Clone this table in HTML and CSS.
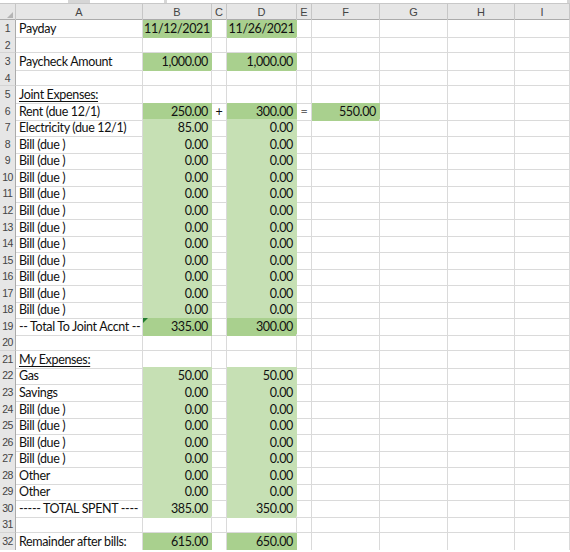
FILE: index.html
```html
<!DOCTYPE html>
<html>
<head>
<meta charset="utf-8">
<link rel="stylesheet" href="styles.css">
</head>
<body>
<div class="sheet">
  <div class="topbar"><span class="tb w1"></span><span class="tb w2"></span><span class="tb w3"></span></div>
  <div class="r hdr"><div class="corner"></div><div class="ch">A</div><div class="ch">B</div><div class="ch">C</div><div class="ch">D</div><div class="ch">E</div><div class="ch">F</div><div class="ch">G</div><div class="ch">H</div><div class="ch">I</div></div>

  <div class="r"><div class="h">1</div><div class="c">Payday</div><div class="c ctr g2">11/12/2021</div><div class="c"></div><div class="c ctr g2">11/26/2021</div><div class="c"></div><div class="c"></div><div class="c"></div><div class="c"></div><div class="c"></div></div>
  <div class="r"><div class="h">2</div><div class="c"></div><div class="c"></div><div class="c"></div><div class="c"></div><div class="c"></div><div class="c"></div><div class="c"></div><div class="c"></div><div class="c"></div></div>
  <div class="r"><div class="h">3</div><div class="c">Paycheck Amount</div><div class="c n g2">1,000.00</div><div class="c"></div><div class="c n g2">1,000.00</div><div class="c"></div><div class="c"></div><div class="c"></div><div class="c"></div><div class="c"></div></div>
  <div class="r"><div class="h">4</div><div class="c"></div><div class="c"></div><div class="c"></div><div class="c"></div><div class="c"></div><div class="c"></div><div class="c"></div><div class="c"></div><div class="c"></div></div>
  <div class="r"><div class="h">5</div><div class="c u">Joint Expenses:</div><div class="c"></div><div class="c"></div><div class="c"></div><div class="c"></div><div class="c"></div><div class="c"></div><div class="c"></div><div class="c"></div></div>
  <div class="r"><div class="h">6</div><div class="c">Rent (due 12/1)</div><div class="c n g2">250.00</div><div class="c ctr">+</div><div class="c n g2">300.00</div><div class="c ctr op">=</div><div class="c n g2">550.00</div><div class="c"></div><div class="c"></div><div class="c"></div></div>
  <div class="r"><div class="h">7</div><div class="c">Electricity (due 12/1)</div><div class="c n g1">85.00</div><div class="c"></div><div class="c n g1">0.00</div><div class="c"></div><div class="c"></div><div class="c"></div><div class="c"></div><div class="c"></div></div>
  <div class="r"><div class="h">8</div><div class="c">Bill (due )</div><div class="c n g1">0.00</div><div class="c"></div><div class="c n g1">0.00</div><div class="c"></div><div class="c"></div><div class="c"></div><div class="c"></div><div class="c"></div></div>
  <div class="r"><div class="h">9</div><div class="c">Bill (due )</div><div class="c n g1">0.00</div><div class="c"></div><div class="c n g1">0.00</div><div class="c"></div><div class="c"></div><div class="c"></div><div class="c"></div><div class="c"></div></div>
  <div class="r"><div class="h">10</div><div class="c">Bill (due )</div><div class="c n g1">0.00</div><div class="c"></div><div class="c n g1">0.00</div><div class="c"></div><div class="c"></div><div class="c"></div><div class="c"></div><div class="c"></div></div>
  <div class="r"><div class="h">11</div><div class="c">Bill (due )</div><div class="c n g1">0.00</div><div class="c"></div><div class="c n g1">0.00</div><div class="c"></div><div class="c"></div><div class="c"></div><div class="c"></div><div class="c"></div></div>
  <div class="r"><div class="h">12</div><div class="c">Bill (due )</div><div class="c n g1">0.00</div><div class="c"></div><div class="c n g1">0.00</div><div class="c"></div><div class="c"></div><div class="c"></div><div class="c"></div><div class="c"></div></div>
  <div class="r"><div class="h">13</div><div class="c">Bill (due )</div><div class="c n g1">0.00</div><div class="c"></div><div class="c n g1">0.00</div><div class="c"></div><div class="c"></div><div class="c"></div><div class="c"></div><div class="c"></div></div>
  <div class="r"><div class="h">14</div><div class="c">Bill (due )</div><div class="c n g1">0.00</div><div class="c"></div><div class="c n g1">0.00</div><div class="c"></div><div class="c"></div><div class="c"></div><div class="c"></div><div class="c"></div></div>
  <div class="r"><div class="h">15</div><div class="c">Bill (due )</div><div class="c n g1">0.00</div><div class="c"></div><div class="c n g1">0.00</div><div class="c"></div><div class="c"></div><div class="c"></div><div class="c"></div><div class="c"></div></div>
  <div class="r"><div class="h">16</div><div class="c">Bill (due )</div><div class="c n g1">0.00</div><div class="c"></div><div class="c n g1">0.00</div><div class="c"></div><div class="c"></div><div class="c"></div><div class="c"></div><div class="c"></div></div>
  <div class="r"><div class="h">17</div><div class="c">Bill (due )</div><div class="c n g1">0.00</div><div class="c"></div><div class="c n g1">0.00</div><div class="c"></div><div class="c"></div><div class="c"></div><div class="c"></div><div class="c"></div></div>
  <div class="r"><div class="h">18</div><div class="c">Bill (due )</div><div class="c n g1">0.00</div><div class="c"></div><div class="c n g1">0.00</div><div class="c"></div><div class="c"></div><div class="c"></div><div class="c"></div><div class="c"></div></div>
  <div class="r"><div class="h">19</div><div class="c">-- Total To Joint Accnt --</div><div class="c n g2 flag">335.00</div><div class="c"></div><div class="c n g2">300.00</div><div class="c"></div><div class="c"></div><div class="c"></div><div class="c"></div><div class="c"></div></div>
  <div class="r"><div class="h">20</div><div class="c"></div><div class="c"></div><div class="c"></div><div class="c"></div><div class="c"></div><div class="c"></div><div class="c"></div><div class="c"></div><div class="c"></div></div>
  <div class="r"><div class="h">21</div><div class="c u">My Expenses:</div><div class="c"></div><div class="c"></div><div class="c"></div><div class="c"></div><div class="c"></div><div class="c"></div><div class="c"></div><div class="c"></div></div>
  <div class="r"><div class="h">22</div><div class="c">Gas</div><div class="c n g1">50.00</div><div class="c"></div><div class="c n g1">50.00</div><div class="c"></div><div class="c"></div><div class="c"></div><div class="c"></div><div class="c"></div></div>
  <div class="r"><div class="h">23</div><div class="c">Savings</div><div class="c n g1">0.00</div><div class="c"></div><div class="c n g1">0.00</div><div class="c"></div><div class="c"></div><div class="c"></div><div class="c"></div><div class="c"></div></div>
  <div class="r"><div class="h">24</div><div class="c">Bill (due )</div><div class="c n g1">0.00</div><div class="c"></div><div class="c n g1">0.00</div><div class="c"></div><div class="c"></div><div class="c"></div><div class="c"></div><div class="c"></div></div>
  <div class="r"><div class="h">25</div><div class="c">Bill (due )</div><div class="c n g1">0.00</div><div class="c"></div><div class="c n g1">0.00</div><div class="c"></div><div class="c"></div><div class="c"></div><div class="c"></div><div class="c"></div></div>
  <div class="r"><div class="h">26</div><div class="c">Bill (due )</div><div class="c n g1">0.00</div><div class="c"></div><div class="c n g1">0.00</div><div class="c"></div><div class="c"></div><div class="c"></div><div class="c"></div><div class="c"></div></div>
  <div class="r"><div class="h">27</div><div class="c">Bill (due )</div><div class="c n g1">0.00</div><div class="c"></div><div class="c n g1">0.00</div><div class="c"></div><div class="c"></div><div class="c"></div><div class="c"></div><div class="c"></div></div>
  <div class="r"><div class="h">28</div><div class="c">Other</div><div class="c n g1">0.00</div><div class="c"></div><div class="c n g1">0.00</div><div class="c"></div><div class="c"></div><div class="c"></div><div class="c"></div><div class="c"></div></div>
  <div class="r"><div class="h">29</div><div class="c">Other</div><div class="c n g1">0.00</div><div class="c"></div><div class="c n g1">0.00</div><div class="c"></div><div class="c"></div><div class="c"></div><div class="c"></div><div class="c"></div></div>
  <div class="r"><div class="h">30</div><div class="c">----- TOTAL SPENT ----</div><div class="c n g1">385.00</div><div class="c"></div><div class="c n g1">350.00</div><div class="c"></div><div class="c"></div><div class="c"></div><div class="c"></div><div class="c"></div></div>
  <div class="r"><div class="h">31</div><div class="c"></div><div class="c"></div><div class="c"></div><div class="c"></div><div class="c"></div><div class="c"></div><div class="c"></div><div class="c"></div><div class="c"></div></div>
  <div class="r"><div class="h">32</div><div class="c">Remainder after bills:</div><div class="c n g2">615.00</div><div class="c"></div><div class="c n g2">650.00</div><div class="c"></div><div class="c"></div><div class="c"></div><div class="c"></div><div class="c"></div></div>
</div>
</body>
</html>
```
FILE: styles.css
```css
* { box-sizing: border-box; }
html, body { margin: 0; padding: 0; background: #ffffff; }
body { width: 570px; height: 552px; overflow: hidden; font-family: "Lato", "Liberation Sans", sans-serif; }

.sheet { display: flex; flex-direction: column; width: 570px; overflow: hidden; }

.topbar { height: 4px; display: flex; background: #d6d6d6; border-bottom: 1px solid #c8c8c8; }
.tb { display: block; height: 3px; background: #ffffff; }
.w1 { width: 68px; }
.w2 { width: 74px; margin-left: 22px; }
.w3 { width: 400px; margin-left: 3px; }

.r {
  display: grid;
  grid-template-columns: 16px 127px 69px 15px 70px 15px 68px 68px 67px 55px;
  height: 16.55px;
}
.hdr { height: 16px; background: #e6e6e6; border-bottom: 1px solid #ababab; }

.corner { position: relative; border-right: 1px solid #c6c6c6; }
.corner::after {
  content: ""; position: absolute; right: 2px; bottom: 2px;
  border-style: solid; border-width: 0 0 6px 6px;
  border-color: transparent transparent #b4b4b4 transparent;
}
.ch {
  font-family: "Liberation Sans", sans-serif; font-size: 11px; color: #444444;
  text-align: center; line-height: 16px; border-right: 1px solid #c6c6c6;
}

.h {
  background: #e6e6e6; border-right: 1px solid #ababab; border-bottom: 1px solid #d4d4d4;
  font-family: "Liberation Sans", sans-serif; font-size: 10.5px; color: #444444;
  text-align: center; line-height: 17px; white-space: nowrap; letter-spacing: -0.5px;
  overflow: hidden;
}

.c {
  border-right: 1px solid #dadada; border-bottom: 1px solid #dadada;
  font-size: 12.5px; color: #111111; line-height: 17px; letter-spacing: -0.35px;
  padding: 0 3px; white-space: nowrap; overflow: visible;
}
.n { text-align: right; }
.ctr { text-align: center; padding: 0; }
.op { color: #666666; }
.u { text-decoration: underline; text-underline-offset: 2px; }

.g1 { background: #c6e0b4; border-color: #c6e0b4; }
.g2 { background: #a9d08e; border-color: #a9d08e; }

.flag { position: relative; }
.flag::before {
  content: ""; position: absolute; left: 0; top: 0;
  border-style: solid; border-width: 5px 5px 0 0;
  border-color: #207a2e transparent transparent transparent;
}
```
